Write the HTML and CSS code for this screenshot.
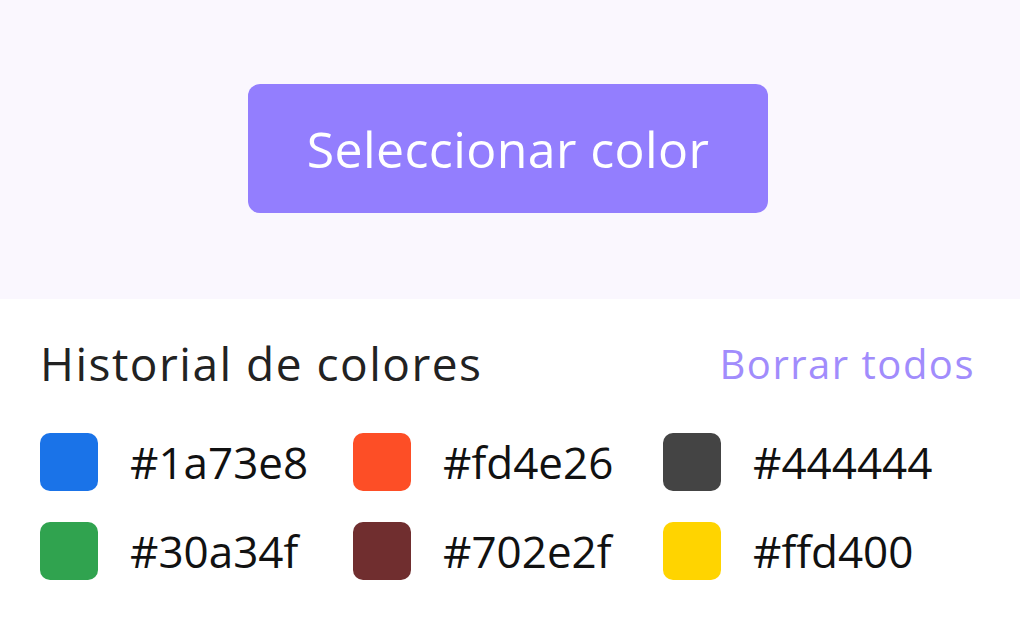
FILE: index.html
```html
<!DOCTYPE html>
<html lang="es">
<head>
    <meta charset="UTF-8">
    <meta name="viewport" content="width=device-width, initial-scale=1.0">
    <title>Selector de color</title>
    <link rel="stylesheet" href="styles.css">
</head>
<body>
    <div class="picker">
        <button class="btn-pick">Seleccionar color</button>
    </div>

    <div class="history">
        <div class="history-head">
            <h2>Historial de colores</h2>
            <a class="clear-all" href="#">Borrar todos</a>
        </div>

        <ul class="swatches">
            <li><span class="swatch" style="background: #1a73e8"></span>#1a73e8</li>
            <li><span class="swatch" style="background: #fd4e26"></span>#fd4e26</li>
            <li><span class="swatch" style="background: #444444"></span>#444444</li>
            <li><span class="swatch" style="background: #30a34f"></span>#30a34f</li>
            <li><span class="swatch" style="background: #702e2f"></span>#702e2f</li>
            <li><span class="swatch" style="background: #ffd400"></span>#ffd400</li>
        </ul>
    </div>
</body>
</html>
```

FILE: styles.css
```css
body {
    margin: 0;
    font-family: "Open Sans", "Liberation Sans", sans-serif;
    background: #ffffff;
    color: #1a1a1a;
}

.picker {
    height: 299px;
    background: #faf7fe;
    display: flex;
    justify-content: center;
    align-items: center;
}

.btn-pick {
    width: 520px;
    height: 129px;
    margin: -2px 4px 0 0;
    border: none;
    border-radius: 12px;
    background: #937efe;
    color: #ffffff;
    font-family: inherit;
    font-size: 50px;
    letter-spacing: 0.4px;
    cursor: pointer;
}

.history {
    padding: 33px 45px 0 40px;
}

.history-head {
    display: flex;
    justify-content: space-between;
    align-items: center;
}

.history-head h2 {
    margin: 0;
    font-size: 46px;
    font-weight: 400;
    letter-spacing: 1.5px;
    color: #222222;
}

.clear-all {
    font-size: 40px;
    letter-spacing: 1.5px;
    color: #a18cfc;
    text-decoration: none;
}

.swatches {
    list-style: none;
    margin: 39px 0 0 0;
    padding: 0;
    display: grid;
    grid-template-columns: 313px 310px 1fr;
    row-gap: 31px;
}

.swatches li {
    display: flex;
    align-items: center;
    gap: 32px;
    font-size: 44px;
    line-height: 58px;
    font-weight: 500;
    color: #111111;
}

.swatch {
    width: 58px;
    height: 58px;
    border-radius: 10px;
    flex-shrink: 0;
}
```
